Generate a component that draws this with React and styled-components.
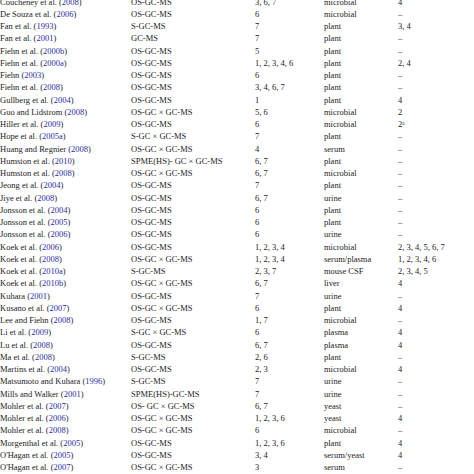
import React from 'react';
import styled, { createGlobalStyle } from 'styled-components';

const GlobalStyle = createGlobalStyle`
    html, body {
        margin: 0;
        padding: 0;
        background: #ffffff;
        overflow: hidden;
    }
`;

const Table = styled.div`
    display: grid;
    grid-template-columns: 131px 124px 69px 74px 1fr;
    grid-auto-rows: 12.26px;
    margin-top: -4.5px;
    font-family: 'Liberation Serif', 'Times New Roman', serif;
    font-size: 8.5px;
    line-height: 12.26px;
    color: #1c1c1c;
    white-space: nowrap;
`;

const Cell = styled.div`
    overflow: visible;
`;

const Year = styled.span`
    color: #2b2ba8;
`;

const rows = [
    ['Coucheney et al.', '2008', 'OS-GC-MS', '3, 6, 7', 'microbial', '4'],
    ['De Souza et al.', '2006', 'OS-GC-MS', '6', 'microbial', '–'],
    ['Fan et al.', '1993', 'S-GC-MS', '7', 'plant', '3, 4'],
    ['Fan et al.', '2001', 'GC-MS', '7', 'plant', '–'],
    ['Fiehn et al.', '2000b', 'OS-GC-MS', '5', 'plant', '–'],
    ['Fiehn et al.', '2000a', 'OS-GC-MS', '1, 2, 3, 4, 6', 'plant', '2, 4'],
    ['Fiehn', '2003', 'OS-GC-MS', '6', 'plant', '–'],
    ['Fiehn et al.', '2008', 'OS-GC-MS', '3, 4, 6, 7', 'plant', '–'],
    ['Gullberg et al.', '2004', 'OS-GC-MS', '1', 'plant', '4'],
    ['Guo and Lidstrom', '2008', 'OS-GC × GC-MS', '5, 6', 'microbial', '2'],
    ['Hiller et al.', '2009', 'OS-GC-MS', '6', 'microbial', '2ᵃ'],
    ['Hope et al.', '2005a', 'S-GC × GC-MS', '7', 'plant', '–'],
    ['Huang and Regnier', '2008', 'OS-GC × GC-MS', '4', 'serum', '–'],
    ['Humston et al.', '2010', 'SPME(HS)- GC × GC-MS', '6, 7', 'plant', '–'],
    ['Humston et al.', '2008', 'OS-GC × GC-MS', '6, 7', 'microbial', '–'],
    ['Jeong et al.', '2004', 'OS-GC-MS', '7', 'plant', '–'],
    ['Jiye et al.', '2008', 'OS-GC-MS', '6, 7', 'urine', '–'],
    ['Jonsson et al.', '2004', 'OS-GC-MS', '6', 'plant', '–'],
    ['Jonsson et al.', '2005', 'OS-GC-MS', '6', 'plant', '–'],
    ['Jonsson et al.', '2006', 'OS-GC-MS', '6', 'urine', '–'],
    ['Koek et al.', '2006', 'OS-GC-MS', '1, 2, 3, 4', 'microbial', '2, 3, 4, 5, 6, 7'],
    ['Koek et al.', '2008', 'OS-GC × GC-MS', '1, 2, 3, 4', 'serum/plasma', '1, 2, 3, 4, 6'],
    ['Koek et al.', '2010a', 'S-GC-MS', '2, 3, 7', 'mouse CSF', '2, 3, 4, 5'],
    ['Koek et al.', '2010b', 'OS-GC × GC-MS', '6, 7', 'liver', '4'],
    ['Kuhara', '2001', 'OS-GC-MS', '7', 'urine', '–'],
    ['Kusano et al.', '2007', 'OS-GC × GC-MS', '6', 'plant', '4'],
    ['Lee and Fiehn', '2008', 'OS-GC-MS', '1, 7', 'microbial', '–'],
    ['Li et al.', '2009', 'S-GC × GC-MS', '6', 'plasma', '4'],
    ['Lu et al.', '2008', 'OS-GC-MS', '6, 7', 'plasma', '4'],
    ['Ma et al.', '2008', 'S-GC-MS', '2, 6', 'plant', '–'],
    ['Martins et al.', '2004', 'OS-GC-MS', '2, 3', 'microbial', '4'],
    ['Matsumoto and Kuhara', '1996', 'S-GC-MS', '7', 'urine', '–'],
    ['Mills and Walker', '2001', 'SPME(HS)-GC-MS', '7', 'urine', '–'],
    ['Mohler et al.', '2007', 'OS- GC × GC-MS', '6, 7', 'yeast', '–'],
    ['Mohler et al.', '2006', 'OS-GC × GC-MS', '1, 2, 3, 6', 'yeast', '4'],
    ['Mohler et al.', '2008', 'OS-GC × GC-MS', '6', 'microbial', '–'],
    ['Morgenthal et al.', '2005', 'OS-GC-MS', '1, 2, 3, 6', 'plant', '4'],
    ["O'Hagan et al.", '2005', 'OS-GC-MS', '3, 4', 'serum/yeast', '4'],
    ["O'Hagan et al.", '2007', 'OS-GC × GC-MS', '3', 'serum', '–'],
];

const App = () => {
    return (
        <>
            <GlobalStyle />
            <Table>
                {rows.map((r, i) => (
                    <React.Fragment key={i}>
                        <Cell>
                            {r[0]} (<Year>{r[1]}</Year>)
                        </Cell>
                        <Cell>{r[2]}</Cell>
                        <Cell>{r[3]}</Cell>
                        <Cell>{r[4]}</Cell>
                        <Cell>{r[5]}</Cell>
                    </React.Fragment>
                ))}
            </Table>
        </>
    );
};

export default App;
